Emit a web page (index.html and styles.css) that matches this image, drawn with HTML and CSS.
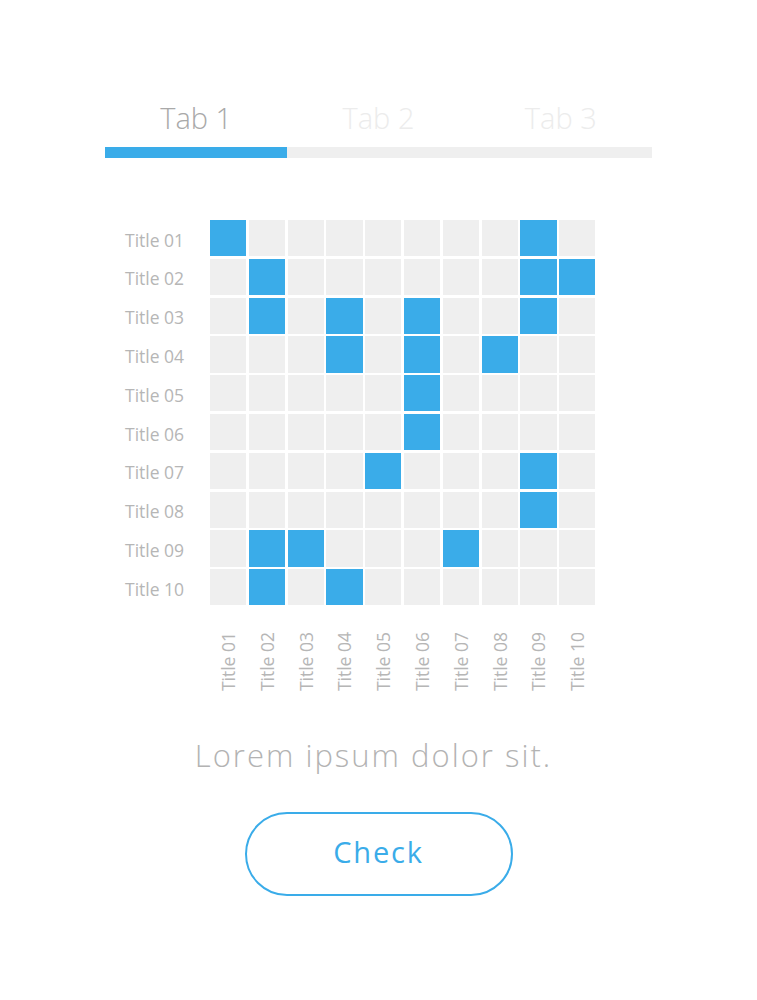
FILE: index.html
```html
<!DOCTYPE html>
<html lang="en">
<head>
<meta charset="utf-8">
<title>Matrix</title>
<link rel="stylesheet" href="styles.css">
</head>
<body>
<main class="screen">
  <nav class="tabs">
    <div class="tab-labels">
      <span class="tab tab-active">Tab 1</span>
      <span class="tab">Tab 2</span>
      <span class="tab">Tab 3</span>
    </div>
    <div class="tab-track"><div class="tab-fill"></div></div>
  </nav>

  <section class="matrix">
    <span class="row-label">Title 01</span>
    <i class="cell on"></i><i class="cell"></i><i class="cell"></i><i class="cell"></i><i class="cell"></i><i class="cell"></i><i class="cell"></i><i class="cell"></i><i class="cell on"></i><i class="cell"></i>
    <span class="row-label">Title 02</span>
    <i class="cell"></i><i class="cell on"></i><i class="cell"></i><i class="cell"></i><i class="cell"></i><i class="cell"></i><i class="cell"></i><i class="cell"></i><i class="cell on"></i><i class="cell on"></i>
    <span class="row-label">Title 03</span>
    <i class="cell"></i><i class="cell on"></i><i class="cell"></i><i class="cell on"></i><i class="cell"></i><i class="cell on"></i><i class="cell"></i><i class="cell"></i><i class="cell on"></i><i class="cell"></i>
    <span class="row-label">Title 04</span>
    <i class="cell"></i><i class="cell"></i><i class="cell"></i><i class="cell on"></i><i class="cell"></i><i class="cell on"></i><i class="cell"></i><i class="cell on"></i><i class="cell"></i><i class="cell"></i>
    <span class="row-label">Title 05</span>
    <i class="cell"></i><i class="cell"></i><i class="cell"></i><i class="cell"></i><i class="cell"></i><i class="cell on"></i><i class="cell"></i><i class="cell"></i><i class="cell"></i><i class="cell"></i>
    <span class="row-label">Title 06</span>
    <i class="cell"></i><i class="cell"></i><i class="cell"></i><i class="cell"></i><i class="cell"></i><i class="cell on"></i><i class="cell"></i><i class="cell"></i><i class="cell"></i><i class="cell"></i>
    <span class="row-label">Title 07</span>
    <i class="cell"></i><i class="cell"></i><i class="cell"></i><i class="cell"></i><i class="cell on"></i><i class="cell"></i><i class="cell"></i><i class="cell"></i><i class="cell on"></i><i class="cell"></i>
    <span class="row-label">Title 08</span>
    <i class="cell"></i><i class="cell"></i><i class="cell"></i><i class="cell"></i><i class="cell"></i><i class="cell"></i><i class="cell"></i><i class="cell"></i><i class="cell on"></i><i class="cell"></i>
    <span class="row-label">Title 09</span>
    <i class="cell"></i><i class="cell on"></i><i class="cell on"></i><i class="cell"></i><i class="cell"></i><i class="cell"></i><i class="cell on"></i><i class="cell"></i><i class="cell"></i><i class="cell"></i>
    <span class="row-label">Title 10</span>
    <i class="cell"></i><i class="cell on"></i><i class="cell"></i><i class="cell on"></i><i class="cell"></i><i class="cell"></i><i class="cell"></i><i class="cell"></i><i class="cell"></i><i class="cell"></i>

    <span class="corner"></span>
    <span class="col-label">Title 01</span>
    <span class="col-label">Title 02</span>
    <span class="col-label">Title 03</span>
    <span class="col-label">Title 04</span>
    <span class="col-label">Title 05</span>
    <span class="col-label">Title 06</span>
    <span class="col-label">Title 07</span>
    <span class="col-label">Title 08</span>
    <span class="col-label">Title 09</span>
    <span class="col-label">Title 10</span>
  </section>

  <p class="caption">Lorem ipsum dolor sit.</p>
  <button class="check" type="button">Check</button>
</main>
</body>
</html>
```

FILE: styles.css
```css
html, body {
  margin: 0;
  background: #ffffff;
}

.screen {
  width: 757px;
  display: flex;
  flex-direction: column;
  align-items: center;
  font-family: "Open Sans", "Liberation Sans", sans-serif;
}

/* tab strip */
.tabs {
  width: 547px;
  margin-top: 98px;
}

.tab-labels {
  display: grid;
  grid-template-columns: repeat(3, 1fr);
  text-align: center;
}

.tab {
  font-size: 29px;
  line-height: 40px;
  font-weight: 300;
  color: #ececec;
}

.tab-active {
  color: #a9a9a9;
}

.tab-track {
  margin-top: 9px;
  height: 11px;
  background: #efefef;
}

.tab-fill {
  width: 33.333%;
  height: 100%;
  background: #3aace9;
}

/* heat matrix */
.matrix {
  align-self: flex-start;
  margin-left: 125px;
  margin-top: 62px;
  display: grid;
  grid-template-columns: 82.4px repeat(10, 36.2px);
  grid-template-rows: repeat(10, 36.2px) auto;
  gap: 2.62px;
}

.row-label {
  display: flex;
  align-items: center;
  font-size: 17.5px;
  color: #b6b6b6;
  padding-top: 3px;
}

.cell {
  display: block;
  background: #efefef;
}

.cell.on {
  background: #3aace9;
}

.col-label {
  margin-top: 24px;
  writing-mode: vertical-rl;
  transform: rotate(180deg);
  justify-self: center;
  text-align: left;
  font-size: 17.5px;
  line-height: 36px;
  color: #b6b6b6;
}

/* footer */
.caption {
  margin: 42px 10px 0 0;
  font-size: 31px;
  font-weight: 300;
  line-height: 44px;
  color: #b3b3b3;
  letter-spacing: 2px;
}

.check {
  margin-top: 35px;
  width: 268px;
  height: 84px;
  border: 2.5px solid #3aace9;
  border-radius: 42px;
  background: #ffffff;
  font-family: inherit;
  font-size: 29px;
  font-weight: 500;
  color: #3aace9;
  letter-spacing: 1.8px;
  padding: 0 0 5px;
}
```
